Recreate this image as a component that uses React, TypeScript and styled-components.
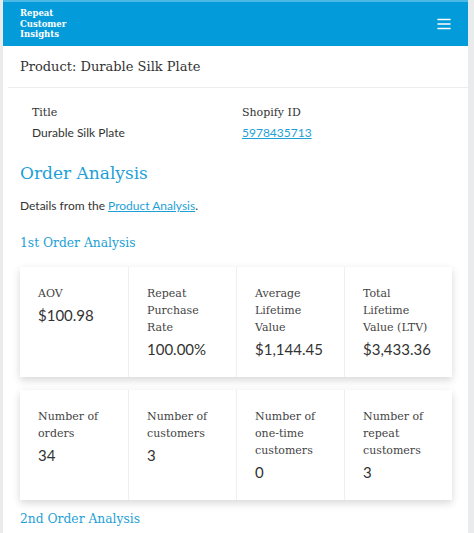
import { createGlobalStyle, styled } from 'styled-components'

const GlobalStyle = createGlobalStyle`
  html, body {
    margin: 0;
    padding: 0;
    background: #e9ebed;
  }
  body {
    font-family: Lato, "Open Sans", sans-serif;
    color: #333;
  }
`

const slab = `"DejaVu Serif", "Liberation Serif", serif`
const sans = `Lato, "Open Sans", sans-serif`
const blue = '#1e9fd6'

const Page = styled.div`
  display: flex;
  flex-direction: column;
  height: 533px;
  margin: 0 6px 0 3px;
  background: #fff;
  border-top: 2px solid #4bb8e6;
`

const Header = styled.header`
  display: flex;
  align-items: center;
  justify-content: space-between;
  height: 44px;
  padding: 0 17px;
  background: #039bd9;
  flex-shrink: 0;
`

const Brand = styled.div`
  font-family: ${slab};
  font-weight: bold;
  font-size: 8.5px;
  line-height: 10.5px;
  color: #fff;
  width: 60px;
`

const MenuButton = styled.button`
  border: 0;
  background: none;
  padding: 0;
  display: flex;
  cursor: pointer;
`

const Scroller = styled.main`
  flex: 1;
  overflow-y: auto;
`

const TitleBar = styled.div`
  height: 41px;
  display: flex;
  align-items: center;
  padding: 0 17px;
  font-family: ${slab};
  font-size: 13px;
  color: #333;
`

const Section = styled.section`
  margin-left: 5px;
  border-top: 1px solid #eeeeee;
  padding: 15px 10px 40px 12px;
`

const InfoTable = styled.div`
  display: grid;
  grid-template-columns: 210px 1fr;
  padding-left: 12px;
  font-size: 12px;
  line-height: 20px;
`

const InfoHead = styled.div`
  font-family: ${slab};
  font-size: 11px;
`

const IdLink = styled.a`
  color: ${blue};
  text-decoration: underline;
`

const H2 = styled.h2`
  margin: 18px 0 0;
  font-family: ${slab};
  font-weight: normal;
  font-size: 17px;
  line-height: 24px;
  color: ${blue};
`

const Lead = styled.p`
  margin: 12px 0 0;
  font-size: 12px;
  line-height: 17px;
`

const H3 = styled.h3<{ $top: number }>`
  margin: ${({ $top }) => $top}px 0 0;
  font-family: ${slab};
  font-weight: normal;
  font-size: 12.3px;
  line-height: 18px;
  color: ${blue};
`

const StatCard = styled.div<{ $top: number }>`
  display: grid;
  grid-template-columns: repeat(4, 1fr);
  width: 432px;
  margin-top: ${({ $top }) => $top}px;
  background: #fff;
  box-shadow: 0 3px 8px rgba(0, 0, 0, 0.16);
`

const Stat = styled.div`
  padding: 18px 14px 17px 18px;
  border-left: 1px solid #efefef;

  &:first-child {
    border-left: 0;
  }
`

const StatLabel = styled.div`
  font-family: ${slab};
  font-size: 11px;
  line-height: 17px;
  color: #444;
`

const StatValue = styled.div`
  margin-top: 2px;
  font-family: ${sans};
  font-size: 15px;
  line-height: 22px;
  color: #333;
`

type StatItem = { label: string; value: string }

const firstOrder: StatItem[][] = [
  [
    { label: 'AOV', value: '$100.98' },
    { label: 'Repeat Purchase Rate', value: '100.00%' },
    { label: 'Average Lifetime Value', value: '$1,144.45' },
    { label: 'Total Lifetime Value (LTV)', value: '$3,433.36' },
  ],
  [
    { label: 'Number of orders', value: '34' },
    { label: 'Number of customers', value: '3' },
    { label: 'Number of one-time customers', value: '0' },
    { label: 'Number of repeat customers', value: '3' },
  ],
]

function StatGrid({ items, top }: { items: StatItem[]; top: number }) {
  return (
    <StatCard $top={top}>
      {items.map((item) => (
        <Stat key={item.label}>
          <StatLabel>{item.label}</StatLabel>
          <StatValue>{item.value}</StatValue>
        </Stat>
      ))}
    </StatCard>
  )
}

export default function App() {
  return (
    <>
      <GlobalStyle />
      <Page>
        <Header>
          <Brand>Repeat Customer Insights</Brand>
          <MenuButton aria-label="Menu">
            <svg width="14" height="12" viewBox="0 0 14 12">
              <g stroke="#fff" strokeWidth="1.6" strokeLinecap="round">
                <line x1="1" y1="1.5" x2="13" y2="1.5" />
                <line x1="1" y1="6" x2="13" y2="6" />
                <line x1="1" y1="10.5" x2="13" y2="10.5" />
              </g>
            </svg>
          </MenuButton>
        </Header>

        <Scroller>
          <TitleBar>Product: Durable Silk Plate</TitleBar>

          <Section>
            <InfoTable>
              <InfoHead>Title</InfoHead>
              <InfoHead>Shopify ID</InfoHead>
              <div>Durable Silk Plate</div>
              <div>
                <IdLink href="#">5978435713</IdLink>
              </div>
            </InfoTable>

            <H2>Order Analysis</H2>
            <Lead>
              Details from the <IdLink href="#">Product Analysis</IdLink>.
            </Lead>

            <H3 $top={20}>1st Order Analysis</H3>
            {firstOrder.map((row, i) => (
              <StatGrid key={i} items={row} top={i === 0 ? 15 : 13} />
            ))}

            <H3 $top={10}>2nd Order Analysis</H3>
          </Section>
        </Scroller>
      </Page>
    </>
  )
}
